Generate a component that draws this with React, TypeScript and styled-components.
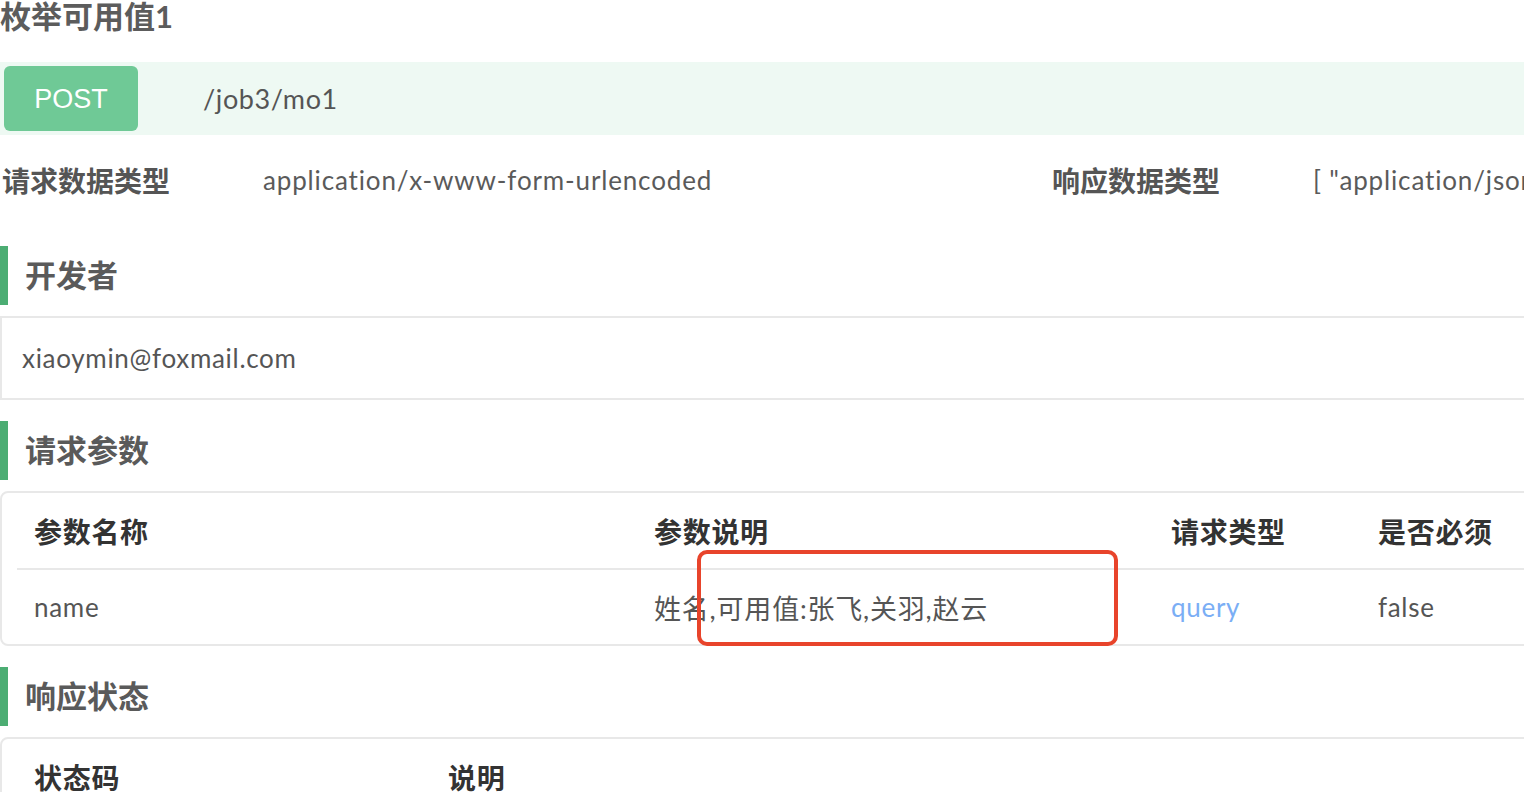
import styled, { createGlobalStyle } from 'styled-components'

const GlobalStyle = createGlobalStyle`
  html, body {
    margin: 0;
    padding: 0;
    background: #fff;
    overflow: hidden;
  }
  body {
    font-family: "Lato", "Noto Sans CJK SC", sans-serif;
    color: #555;
  }
`

const Page = styled.div`
  width: 1560px;
  display: flex;
  flex-direction: column;
`

const Title = styled.h1`
  margin: -4px 0 0 0;
  height: 66px;
  font-size: 31px;
  line-height: 40px;
  font-weight: 700;
  color: #5c5c5c;
`

const UrlBar = styled.div`
  display: flex;
  align-items: center;
  height: 73px;
  padding: 0 4px;
  background: #eef9f3;
`

const Method = styled.span`
  display: flex;
  align-items: center;
  justify-content: center;
  width: 134px;
  height: 65px;
  border-radius: 6px;
  background: #6fc996;
  color: #fff;
  font-family: "Liberation Sans", "Noto Sans CJK SC", sans-serif;
  font-size: 27px;
  padding-top: 2px;
  box-sizing: border-box;
`

const Path = styled.span`
  margin-left: 65px;
  font-size: 27px;
  letter-spacing: 0.6px;
  color: #555;
`

const MetaRow = styled.div`
  display: flex;
  align-items: center;
  height: 90px;
  padding-left: 2px;
  white-space: nowrap;
`

const MetaLabel = styled.span<{ $w: number }>`
  width: ${({ $w }) => $w}px;
  flex: none;
  font-size: 28px;
  font-weight: 700;
  color: #555;
`

const MetaValue = styled.span<{ $w?: number }>`
  width: ${({ $w }) => ($w ? `${$w}px` : 'auto')};
  flex: none;
  font-size: 26px;
  letter-spacing: 0.85px;
  color: #5a5a5a;
`

const Section = styled.div`
  display: flex;
  flex-direction: column;
  gap: 11px;
  margin-top: 21px;
`

const SectionTitle = styled.h2`
  margin: 0;
  height: 59px;
  display: flex;
  align-items: center;
  padding: 0 0 5px 17px;
  box-sizing: border-box;
  border-left: 8px solid #4cad73;
  font-size: 31px;
  font-weight: 700;
  color: #5a5a5a;
`

const InfoBox = styled.div`
  display: flex;
  align-items: center;
  height: 80px;
  padding-left: 20px;
  border: 2px solid #e8e8e8;
  font-size: 26px;
  letter-spacing: 0.7px;
  color: #555;
`

const TableBox = styled.div`
  position: relative;
  padding-left: 15px;
  border: 2px solid #e8e8e8;
  border-radius: 8px;
`

const Row = styled.div<{ $head?: boolean }>`
  display: flex;
  align-items: center;
  height: ${({ $head }) => ($head ? 75 : 74)}px;
  border-bottom: ${({ $head }) => ($head ? '2px solid #e8e8e8' : 'none')};
  font-size: ${({ $head }) => ($head ? 28 : 26)}px;
  font-weight: ${({ $head }) => ($head ? 700 : 400)};
  color: ${({ $head }) => ($head ? '#333' : '#555')};
`

const Cell = styled.span<{ $w?: number; $link?: boolean; $cjk?: boolean }>`
  flex: ${({ $w }) => ($w ? 'none' : '1')};
  width: ${({ $w }) => ($w ? `${$w}px` : 'auto')};
  padding-left: 17px;
  box-sizing: border-box;
  white-space: nowrap;
  font-size: ${({ $cjk }) => ($cjk ? '27px' : 'inherit')};
  letter-spacing: ${({ $cjk }) => ($cjk ? '0.8px' : '0.7px')};
  color: ${({ $link }) => ($link ? '#7aaef5' : 'inherit')};
`

const Highlight = styled.div`
  position: absolute;
  left: 695px;
  top: 57px;
  width: 413px;
  height: 88px;
  border: 4px solid #e8442b;
  border-radius: 10px;
  pointer-events: none;
`

const paramCols = [620, 517, 207]

export default function App() {
  return (
    <>
      <GlobalStyle />
      <Page>
        <Title>枚举可用值1</Title>
        <UrlBar>
          <Method>POST</Method>
          <Path>/job3/mo1</Path>
        </UrlBar>
        <MetaRow>
          <MetaLabel $w={261}>请求数据类型</MetaLabel>
          <MetaValue $w={789}>application/x-www-form-urlencoded</MetaValue>
          <MetaLabel $w={261}>响应数据类型</MetaLabel>
          <MetaValue>[ "application/json" ]</MetaValue>
        </MetaRow>

        <Section>
          <SectionTitle>开发者</SectionTitle>
          <InfoBox>xiaoymin@foxmail.com</InfoBox>
        </Section>

        <Section>
          <SectionTitle>请求参数</SectionTitle>
          <TableBox>
            <Row $head>
              <Cell $w={paramCols[0]}>参数名称</Cell>
              <Cell $w={paramCols[1]}>参数说明</Cell>
              <Cell $w={paramCols[2]}>请求类型</Cell>
              <Cell>是否必须</Cell>
            </Row>
            <Row>
              <Cell $w={paramCols[0]}>name</Cell>
              <Cell $w={paramCols[1]} $cjk>姓名,可用值:张飞,关羽,赵云</Cell>
              <Cell $w={paramCols[2]} $link>query</Cell>
              <Cell>false</Cell>
            </Row>
            <Highlight />
          </TableBox>
        </Section>

        <Section>
          <SectionTitle>响应状态</SectionTitle>
          <TableBox>
            <Row $head>
              <Cell $w={414}>状态码</Cell>
              <Cell>说明</Cell>
            </Row>
          </TableBox>
        </Section>
      </Page>
    </>
  )
}
